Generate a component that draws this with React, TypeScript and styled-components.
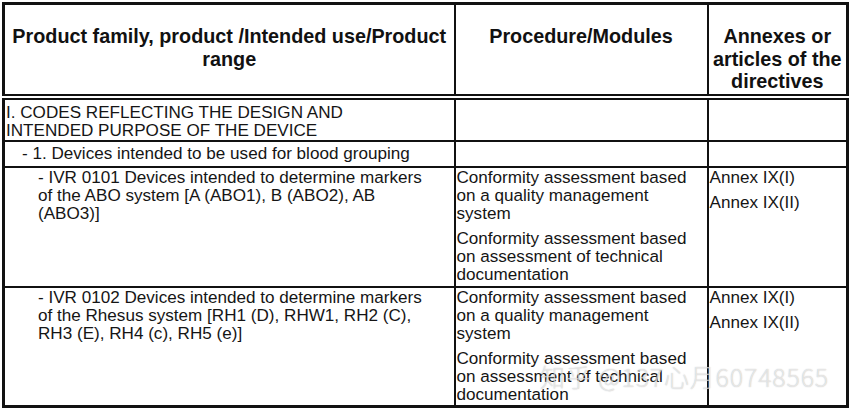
import React, { FC } from "react";
import styled, { createGlobalStyle } from "styled-components";

const GlobalStyle = createGlobalStyle`
  html, body {
    margin: 0;
    padding: 0;
    background: #ffffff;
  }
  body {
    font-family: "Liberation Sans", Arial, sans-serif;
    color: #151515;
  }
`;

const Page = styled.div`
  position: relative;
  width: 850px;
  height: 409px;
  overflow: hidden;
  padding: 2px 0 0 2px;
  box-sizing: border-box;
`;

const Table = styled.table`
  border-collapse: collapse;
  width: 847px;
  table-layout: fixed;
  border: 3px solid #111;
`;

const HeadRow = styled.tr`
  height: 93px;
`;

const HeadCell = styled.th`
  border: 2px solid #111;
  border-bottom: 6px double #111;
  vertical-align: top;
  text-align: center;
  padding: 20px 2px 0;
  font-size: 19.8px;
  line-height: 22.5px;
  font-weight: bold;
  color: #111;
`;

const Row = styled.tr<{ $h: number }>`
  height: ${(p) => p.$h}px;
`;

const Cell = styled.td<{ $indent?: number; $right?: number; $top?: number }>`
  border: 2px solid #111;
  vertical-align: top;
  padding: ${(p) => p.$top ?? 1}px ${(p) => p.$right ?? 0}px 0
    ${(p) => p.$indent ?? 0}px;
  font-size: 17.1px;
  line-height: 18px;
`;

const Para = styled.div<{ $gap?: number }>`
  & + & {
    margin-top: ${(p) => p.$gap ?? 6}px;
  }
`;

const Watermark = styled.div`
  position: absolute;
  left: 540px;
  top: 358px;
  font-family: "Noto Sans CJK SC", "Liberation Sans", sans-serif;
  font-size: 25px;
  font-weight: 300;
  letter-spacing: 0.8px;
  color: rgba(255, 255, 255, 0.6);
  text-shadow: 0 0 1px rgba(110, 110, 110, 0.5);
  pointer-events: none;
`;

type Entry = {
  text: string;
  procedures: string[];
  annexes: string[];
};

const entries: Entry[] = [
  {
    text: "- IVR 0101 Devices intended to determine markers of the ABO system [A (ABO1), B (ABO2), AB (ABO3)]",
    procedures: [
      "Conformity assessment based on a quality management system",
      "Conformity assessment based on assessment of technical documentation",
    ],
    annexes: ["Annex IX(I)", "Annex IX(II)"],
  },
  {
    text: "- IVR 0102 Devices intended to determine markers of the Rhesus system [RH1 (D), RHW1, RH2 (C), RH3 (E), RH4 (c), RH5 (e)]",
    procedures: [
      "Conformity assessment based on a quality management system",
      "Conformity assessment based on assessment of technical documentation",
    ],
    annexes: ["Annex IX(I)", "Annex IX(II)"],
  },
];

const App: FC = () => {
  return (
    <Page>
      <GlobalStyle />
      <Table>
        <colgroup>
          <col style={{ width: 451 }} />
          <col style={{ width: 253 }} />
          <col />
        </colgroup>
        <thead>
          <HeadRow>
            <HeadCell>Product family, product /Intended use/Product range</HeadCell>
            <HeadCell>Procedure/Modules</HeadCell>
            <HeadCell>Annexes or articles of the directives</HeadCell>
          </HeadRow>
        </thead>
        <tbody>
          <Row $h={44}>
            <Cell $indent={1} $top={4}>
              I. CODES REFLECTING THE DESIGN AND
              <br />
              INTENDED PURPOSE OF THE DEVICE
            </Cell>
            <Cell />
            <Cell />
          </Row>
          <Row $h={26}>
            <Cell $indent={17} $top={3}>
              - 1. Devices intended to be used for blood grouping
            </Cell>
            <Cell />
            <Cell />
          </Row>
          {entries.map((e) => (
            <Row $h={120} key={e.text}>
              <Cell $indent={33} $right={13}>
                {e.text}
              </Cell>
              <Cell $indent={1}>
                {e.procedures.map((p, i) => (
                  <Para key={i}>{p}</Para>
                ))}
              </Cell>
              <Cell $indent={1}>
                {e.annexes.map((a, i) => (
                  <Para key={i} $gap={7}>
                    {a}
                  </Para>
                ))}
              </Cell>
            </Row>
          ))}
        </tbody>
      </Table>
      <Watermark>知乎 @137心月60748565</Watermark>
    </Page>
  );
};

export default App;
